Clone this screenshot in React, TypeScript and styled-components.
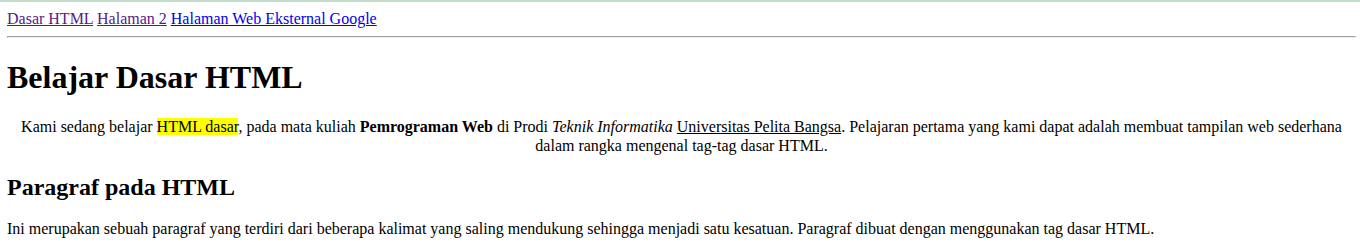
import React from "react";
import styled, { createGlobalStyle } from "styled-components";

const GlobalStyle = createGlobalStyle`
  html, body {
    background: #ffffff;
  }
  body {
    margin: 10px 4px 8px 7px;
    font-family: "Liberation Serif", "Times New Roman", serif;
    font-size: 16px;
    color: #000000;
  }
`;

const TopEdge = styled.div`
  position: fixed;
  top: 0;
  left: 0;
  right: 0;
  height: 2px;
  background: #c3dfcb;
`;

const Nav = styled.nav`
  display: block;
  line-height: 18px;
`;

const NavLink = styled.a<{ $visited?: boolean }>`
  color: ${(p) => (p.$visited ? "#551a8b" : "#0000ee")};
  text-decoration: underline;
`;

const Rule = styled.hr`
  margin: 8px 0;
  height: 0;
  border-style: solid;
  border-width: 1px;
  border-color: #a0a0a0 #eeeeee #eeeeee #a0a0a0;
`;

const Title = styled.h1`
  font-size: 32px;
  font-weight: bold;
  margin: 21px 0;
`;

const Intro = styled.p`
  text-align: center;
  line-height: 19px;
  margin: 16px 0;
`;

const Mark = styled.mark`
  background: #ffff00;
  color: #000000;
`;

const Underline = styled.u`
  text-decoration: underline;
`;

const SubTitle = styled.h2`
  font-size: 24px;
  font-weight: bold;
  margin: 19px 0;
`;

const Para = styled.p`
  margin: 16px 0;
`;

const App = () => {
  return (
    <>
      <GlobalStyle />
      <TopEdge />
      <Nav>
        <NavLink href="#" $visited>
          Dasar HTML
        </NavLink>{" "}
        <NavLink href="#" $visited>
          Halaman 2
        </NavLink>{" "}
        <NavLink href="#">Halaman Web Eksternal Google</NavLink>
      </Nav>
      <Rule />
      <Title>Belajar Dasar HTML</Title>
      <Intro>
        Kami sedang belajar <Mark>HTML dasar</Mark>, pada mata kuliah{" "}
        <b>Pemrograman Web</b> di Prodi <i>Teknik Informatika</i>{" "}
        <Underline>Universitas Pelita Bangsa</Underline>. Pelajaran pertama yang
        kami dapat adalah membuat tampilan web sederhana dalam rangka mengenal
        tag-tag dasar HTML.
      </Intro>
      <SubTitle>Paragraf pada HTML</SubTitle>
      <Para>
        Ini merupakan sebuah paragraf yang terdiri dari beberapa kalimat yang
        saling mendukung sehingga menjadi satu kesatuan. Paragraf dibuat dengan
        menggunakan tag dasar HTML.
      </Para>
    </>
  );
};

export default App;
